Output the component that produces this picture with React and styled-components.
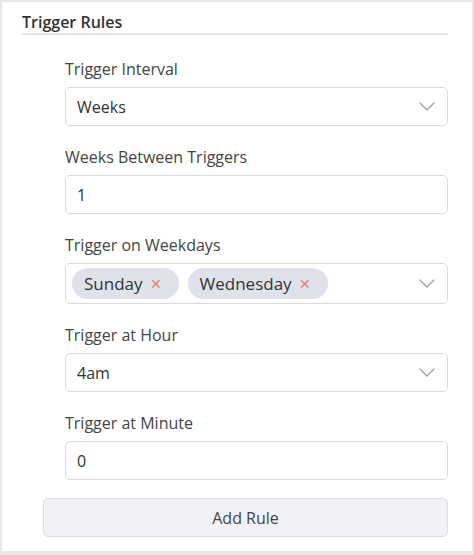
import React, { useState } from 'react'
import styled, { createGlobalStyle } from 'styled-components'

const GlobalStyle = createGlobalStyle`
  html, body {
    margin: 0;
    padding: 0;
    background: #e8e8ea;
  }
  body {
    font-family: "Open Sans", "Liberation Sans", sans-serif;
    color: #333;
  }
`

const Panel = styled.div`
  margin: 2px 2px 0 2px;
  width: 470px;
  height: 549px;
  box-sizing: border-box;
  background: #fff;
  padding: 9px 24px 0 20px;
`

const SectionTitle = styled.h3`
  margin: 0;
  font-size: 16px;
  line-height: 22px;
  font-weight: 600;
  color: #333;
  border-bottom: 2px solid #e4e5ea;
`

const Fields = styled.div`
  display: flex;
  flex-direction: column;
  gap: 20px;
  margin: 23px 0 0 43px;
`

const Field = styled.div`
  display: flex;
  flex-direction: column;
  gap: 7px;
`

const Label = styled.label`
  font-size: 16px;
  line-height: 22px;
  color: #444;
`

const Box = styled.div`
  box-sizing: border-box;
  height: ${p => (p.$tall ? '41px' : '39px')};
  border: 1px solid #d9dae0;
  border-radius: 5px;
  background: #fff;
  display: flex;
  align-items: center;
  padding: ${p => (p.$tall ? '0 12px 0 6px' : '0 12px 0 11px')};
  font-size: 16px;
  color: #333;
`

const Value = styled.span`
  flex: 1;
`

const Chips = styled.div`
  flex: 1;
  display: flex;
  gap: 9px;
`

const Chip = styled.span`
  display: inline-flex;
  align-items: center;
  height: 31px;
  padding: 0 17px 0 12px;
  border-radius: 16px;
  background: #dfe2ea;
  font-size: 17px;
  color: #333;
`

const Remove = styled.span`
  margin-left: 7px;
  color: #f07a74;
  font-size: 14px;
  line-height: 1;
  cursor: pointer;
`

const Button = styled.button`
  margin: 18px 0 0 21px;
  width: 405px;
  height: 39px;
  border: 1px solid #dcdde6;
  border-radius: 5px;
  background: #f1f2f8;
  font-family: inherit;
  font-size: 16px;
  color: #444;
  cursor: pointer;
`

const Chevron = () => (
  <svg width="16" height="9" viewBox="0 0 16 9" fill="none">
    <path d="M1 1l7 7 7-7" stroke="#9a9ca4" strokeWidth="1.2" strokeLinecap="round" strokeLinejoin="round" />
  </svg>
)

const App = () => {
  const [days, setDays] = useState(['Sunday', 'Wednesday'])

  return (
    <>
      <GlobalStyle />
      <Panel>
        <SectionTitle>Trigger Rules</SectionTitle>
        <Fields>
          <Field>
            <Label>Trigger Interval</Label>
            <Box>
              <Value>Weeks</Value>
              <Chevron />
            </Box>
          </Field>
          <Field>
            <Label>Weeks Between Triggers</Label>
            <Box>
              <Value>1</Value>
            </Box>
          </Field>
          <Field>
            <Label>Trigger on Weekdays</Label>
            <Box $tall>
              <Chips>
                {days.map(d => (
                  <Chip key={d}>
                    {d}
                    <Remove onClick={() => setDays(days.filter(x => x !== d))}>✕</Remove>
                  </Chip>
                ))}
              </Chips>
              <Chevron />
            </Box>
          </Field>
          <Field>
            <Label>Trigger at Hour</Label>
            <Box>
              <Value>4am</Value>
              <Chevron />
            </Box>
          </Field>
          <Field>
            <Label>Trigger at Minute</Label>
            <Box>
              <Value>0</Value>
            </Box>
          </Field>
        </Fields>
        <Button>Add Rule</Button>
      </Panel>
    </>
  )
}

export default App
